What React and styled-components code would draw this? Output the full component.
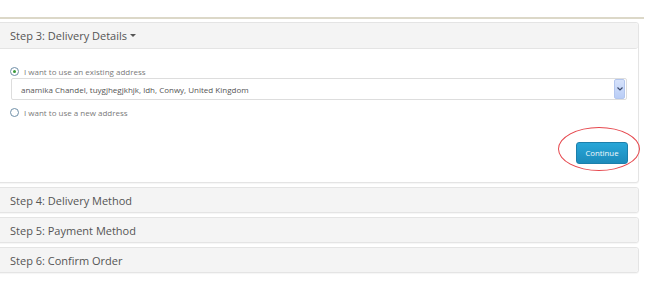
import React from 'react';
import styled, { createGlobalStyle } from 'styled-components';

const Global = createGlobalStyle`
  body {
    margin: 0;
    background: #fff;
    font-family: 'Open Sans', 'Liberation Sans', sans-serif;
    overflow: hidden;
  }
`;

const Page = styled.div`
  width: 647px;
  height: 305px;
  padding-top: 17px;
  box-sizing: border-box;
`;

const TopRule = styled.div`
  width: 644px;
  height: 2px;
  background: #dcd8c8;
`;

const Steps = styled.div`
  margin: 3px 0 0 -4px;
  width: 643px;
  display: flex;
  flex-direction: column;
  gap: 4px;
`;

const Panel = styled.div`
  border: 1px solid #e4e4e4;
  border-radius: 3px;
  background: #fff;
  box-shadow: 0 1px 1px rgba(0, 0, 0, 0.04);
`;

const Heading = styled.div`
  height: ${p => (p.open ? '25px' : '24px')};
  display: flex;
  align-items: center;
  padding-left: 13px;
  background: #f4f4f4;
  color: #555;
  font-size: 11px;
  border-bottom: ${p => (p.open ? '1px solid #e4e4e4' : 'none')};
  border-radius: 3px;
`;

const Caret = styled.span`
  display: inline-block;
  margin-left: 3px;
  width: 0;
  height: 0;
  border-left: 3px solid transparent;
  border-right: 3px solid transparent;
  border-top: 3px solid #555;
`;

const Body = styled.div`
  padding: 17px 11px 18px 13px;
  display: flex;
  flex-direction: column;
`;

const RadioRow = styled.label`
  display: flex;
  align-items: center;
  gap: 5px;
  font-size: 8px;
  color: #7a7a7a;
  height: 10px;
  margin: ${p => p.m || '0'};
`;

const Radio = styled.span`
  width: 7px;
  height: 7px;
  border-radius: 50%;
  border: 1px solid #6f8fa8;
  display: flex;
  align-items: center;
  justify-content: center;
  background: #fff;
  &::after {
    content: '';
    width: 3px;
    height: 3px;
    border-radius: 50%;
    background: ${p => (p.checked ? '#3a9a3a' : 'transparent')};
  }
`;

const Select = styled.div`
  margin-left: 1px;
  height: 20px;
  border: 1px solid #ddd;
  border-radius: 2px;
  display: flex;
  align-items: center;
  justify-content: space-between;
  padding-left: 9px;
  padding-right: 1px;
  font-size: 8px;
  color: #555;
`;

const Arrow = styled.span`
  width: 9px;
  height: 18px;
  border: 1px solid #b3c6ee;
  border-radius: 2px;
  background: linear-gradient(#d6e2fb, #b9cdf6);
  display: flex;
  align-items: center;
  justify-content: center;
`;

const Actions = styled.div`
  display: flex;
  justify-content: flex-end;
  margin: 22px -1px 0 0;
`;

const Ring = styled.div`
  position: relative;
  &::before {
    content: '';
    position: absolute;
    left: -18px;
    top: -12px;
    width: 82px;
    height: 44px;
    border: 1px solid #e6484e;
    border-radius: 50%;
    box-sizing: border-box;
  }
`;

const Button = styled.button`
  position: relative;
  width: 52px;
  height: 22px;
  border: 1px solid #1c7fab;
  border-radius: 3px;
  background: linear-gradient(#27a6d8, #1d8bbb);
  color: #f2f9fc;
  font-family: inherit;
  font-size: 7.8px;
  padding: 0;
`;

const steps = ['Step 4: Delivery Method', 'Step 5: Payment Method', 'Step 6: Confirm Order'];

export default function App() {
  return (
    <>
      <Global />
      <Page>
        <TopRule />
        <Steps>
          <Panel>
            <Heading open>
              Step 3: Delivery Details <Caret />
            </Heading>
            <Body>
              <RadioRow>
                <Radio checked />
                I want to use an existing address
              </RadioRow>
              <Select style={{ marginTop: 2 }}>
                anamika Chandel, tuygjhegjkhjk, ldh, Conwy, United Kingdom
                <Arrow>
                  <svg width="6" height="4" viewBox="0 0 6 4">
                    <path d="M0.5 0.5 L3 3 L5.5 0.5" stroke="#3b4a6b" strokeWidth="1.2" fill="none" />
                  </svg>
                </Arrow>
              </Select>
              <RadioRow m="7px 0 0">
                <Radio />
                I want to use a new address
              </RadioRow>
              <Actions>
                <Ring>
                  <Button>Continue</Button>
                </Ring>
              </Actions>
            </Body>
          </Panel>
          {steps.map(s => (
            <Panel key={s}>
              <Heading>{s}</Heading>
            </Panel>
          ))}
        </Steps>
      </Page>
    </>
  );
}
